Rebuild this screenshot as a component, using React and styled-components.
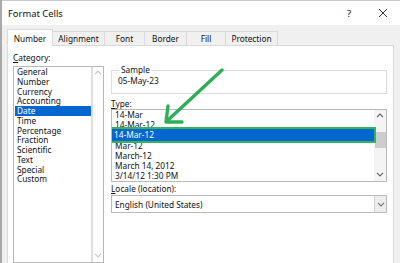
import React from 'react'
import styled, { createGlobalStyle } from 'styled-components'

const GlobalStyle = createGlobalStyle`
  html, body { margin: 0; padding: 0; }
  body {
    width: 400px;
    height: 263px;
    overflow: hidden;
    background: #a9a9a9;
    font-family: "Noto Sans", "Open Sans", "Liberation Sans", sans-serif;
    color: #111;
  }
`

const Window = styled.div`
  position: relative;
  margin-left: 2px;
  width: 398px;
  height: 263px;
  background: #f0f0f0;
  display: flex;
  flex-direction: column;
  overflow: hidden;
`

const TitleBar = styled.div`
  height: 25px;
  flex: none;
  background: #fff;
  display: flex;
  align-items: center;
  padding-left: 6px;
  font-size: 9.4px;
  border-top: 1px solid #c8c8c8;
  box-sizing: border-box;
`

const Title = styled.div`
  flex: 1;
`

const HelpMark = styled.div`
  width: 12px;
  text-align: center;
  font-size: 9.5px;
  margin-right: 23px;
`

const CloseBox = styled.div`
  width: 10px;
  height: 10px;
  margin-right: 12px;
  display: flex;
`

const Body = styled.div`
  flex: 1;
  padding: 3px 6px 0 5px;
  display: flex;
  flex-direction: column;
`

const TabRow = styled.div`
  display: flex;
  align-items: flex-end;
  height: 17px;
  position: relative;
  z-index: 1;
`

const Tab = styled.div`
  width: ${p => p.$w}px;
  height: ${p => (p.$active ? 17 : 15)}px;
  box-sizing: border-box;
  display: flex;
  align-items: center;
  justify-content: center;
  font-size: 8.3px;
  background: ${p => (p.$active ? '#fff' : '#f0f0f0')};
  border: 1px solid #d9d9d9;
  border-bottom: ${p => (p.$active ? '1px solid #fff' : '1px solid #d9d9d9')};
  margin-left: ${p => (p.$active ? 0 : -1)}px;
  margin-bottom: -1px;
  padding-top: ${p => (p.$active ? 1 : 0)}px;
`

const Panel = styled.div`
  flex: 1;
  background: #fff;
  border: 1px solid #d9d9d9;
  border-bottom: none;
  padding: 7px 5px 0 5px;
  display: grid;
  grid-template-columns: 91px 276px;
  column-gap: 7px;
  align-items: start;
`

const Column = styled.div`
  display: flex;
  flex-direction: column;
`

const Label = styled.div`
  font-size: 8.3px;
  line-height: 10px;
  height: 10px;
  margin-top: ${p => p.$mt || 0}px;
  margin-bottom: ${p => p.$mb || 0}px;
  u { text-decoration-thickness: 1px; text-underline-offset: 1px; }
`

const ListBox = styled.div`
  display: flex;
  height: ${p => p.$h}px;
  box-sizing: border-box;
  border: 1px solid #b9b9b9;
  background: #fff;
  overflow: hidden;
`

const Items = styled.div`
  flex: 1;
  display: flex;
  flex-direction: column;
  padding-left: ${p => p.$pl || 0}px;
`

const Item = styled.div`
  font-size: 8.3px;
  line-height: ${p => p.$lh}px;
  height: ${p => p.$lh}px;
  flex: none;
  padding-left: ${p => p.$ind}px;
  white-space: nowrap;
  background: ${p => (p.$sel ? '#0466cf' : 'transparent')};
  color: ${p => (p.$sel ? '#fff' : '#111')};
`

const SelectedType = styled(Item)`
  height: 12px;
  line-height: 12px;
  margin: -0.9px 0 -0.9px -1px;
  box-shadow: 0 0 0 2px #34b35a;
  position: relative;
`

const ScrollTrack = styled.div`
  width: ${p => p.$w}px;
  flex: none;
  display: flex;
  flex-direction: column;
  align-items: center;
  justify-content: space-between;
  background: ${p => p.$bg};
  border-left: ${p => p.$line};
  padding: 3px 0 4px;
  box-sizing: border-box;
`

const Thumb = styled.div`
  width: 11px;
  height: 16px;
  background: #cdcdcd;
  margin-top: 14px;
  margin-bottom: auto;
`

const Sample = styled.fieldset`
  margin: 12px 0 0 0;
  padding: 1px 5px 2px 5px;
  border: 1px solid #dcdcdc;
  min-width: 0;
  height: 29px;
  box-sizing: border-box;
  legend {
    font-size: 8.3px;
    line-height: 10px;
    padding: 0 2px;
    margin-left: 2px;
  }
`

const SampleValue = styled.div`
  font-size: 8.3px;
  line-height: 10px;
  padding-left: 1px;
`

const Combo = styled.div`
  height: 18px;
  box-sizing: border-box;
  border: 1px solid #b9b9b9;
  display: flex;
  align-items: stretch;
  margin-top: 1px;
`

const ComboText = styled.div`
  flex: 1;
  font-size: 8.3px;
  display: flex;
  align-items: center;
  padding-left: 3px;
`

const ComboButton = styled.div`
  width: 11px;
  background: #ededed;
  border-left: 1px solid #d4d4d4;
  display: flex;
  align-items: center;
  justify-content: center;
`

const Overlay = styled.svg`
  position: absolute;
  left: 0;
  top: 0;
  width: 398px;
  height: 263px;
  pointer-events: none;
`

const Chevron = ({ up, color = '#606060' }) => (
  <svg width="8" height="5" viewBox="0 0 8 5">
    <path
      d={up ? 'M1 4.2 L4 1 L7 4.2' : 'M1 0.8 L4 4 L7 0.8'}
      fill="none"
      stroke={color}
      strokeWidth="1.1"
    />
  </svg>
)

const tabs = [
  ['Number', 46],
  ['Alignment', 53],
  ['Font', 41],
  ['Border', 43],
  ['Fill', 40],
  ['Protection', 53],
]

const categories = [
  'General', 'Number', 'Currency', 'Accounting', 'Date', 'Time',
  'Percentage', 'Fraction', 'Scientific', 'Text', 'Special', 'Custom',
]

const types = [
  '14-Mar', '14-Mar-12', '14-Mar-12', 'Mar-12', 'March-12',
  'March 14, 2012', '3/14/12 1:30 PM',
]

export default function App() {
  return (
    <>
      <GlobalStyle />
      <Window>
        <TitleBar>
          <Title>Format Cells</Title>
          <HelpMark>?</HelpMark>
          <CloseBox>
            <svg width="10" height="10" viewBox="0 0 10 10">
              <path d="M1 1 L9 9 M9 1 L1 9" stroke="#333" strokeWidth="1" />
            </svg>
          </CloseBox>
        </TitleBar>
        <Body>
          <TabRow>
            {tabs.map(([name, w], i) => (
              <Tab key={name} $w={w} $active={i === 0}>{name}</Tab>
            ))}
          </TabRow>
          <Panel>
            <Column>
              <Label $mb={3}><u>C</u>ategory:</Label>
              <ListBox $h={197}>
                <Items $pl={1}>
                  {categories.map(c => (
                    <Item key={c} $lh={9.75} $ind={2} $sel={c === 'Date'}>{c}</Item>
                  ))}
                </Items>
                <ScrollTrack $w={12} $bg="#fdfdfd" $line="2px solid #dedede">
                  <Chevron up color="#c4c4c4" />
                  <Chevron color="#c4c4c4" />
                </ScrollTrack>
              </ListBox>
            </Column>
            <Column>
              <Sample>
                <legend>Sample</legend>
                <SampleValue>05-May-23</SampleValue>
              </Sample>
              <Label $mt={5}><u>T</u>ype:</Label>
              <ListBox $h={73}>
                <Items>
                  {types.map((t, i) =>
                    i === 2 ? (
                      <SelectedType key={i} $lh={10.2} $ind={3} $sel>{t}</SelectedType>
                    ) : (
                      <Item key={i} $lh={10.2} $ind={3}>{t}</Item>
                    )
                  )}
                </Items>
                <ScrollTrack $w={12} $bg="#f4f4f4" $line="none">
                  <Chevron up />
                  <Thumb />
                  <Chevron />
                </ScrollTrack>
              </ListBox>
              <Label $mt={2}><u>L</u>ocale (location):</Label>
              <Combo>
                <ComboText>English (United States)</ComboText>
                <ComboButton>
                  <Chevron color="#707070" />
                </ComboButton>
              </Combo>
            </Column>
          </Panel>
        </Body>
        <Overlay viewBox="0 0 398 263">
          <path d="M220 70 L165 121" stroke="#2fae58" strokeWidth="3.4" strokeLinecap="round" fill="none" />
          <path d="M166 106 L164 122 L180 122" stroke="#2fae58" strokeWidth="3.4" strokeLinecap="round" strokeLinejoin="round" fill="none" />
        </Overlay>
      </Window>
    </>
  )
}
